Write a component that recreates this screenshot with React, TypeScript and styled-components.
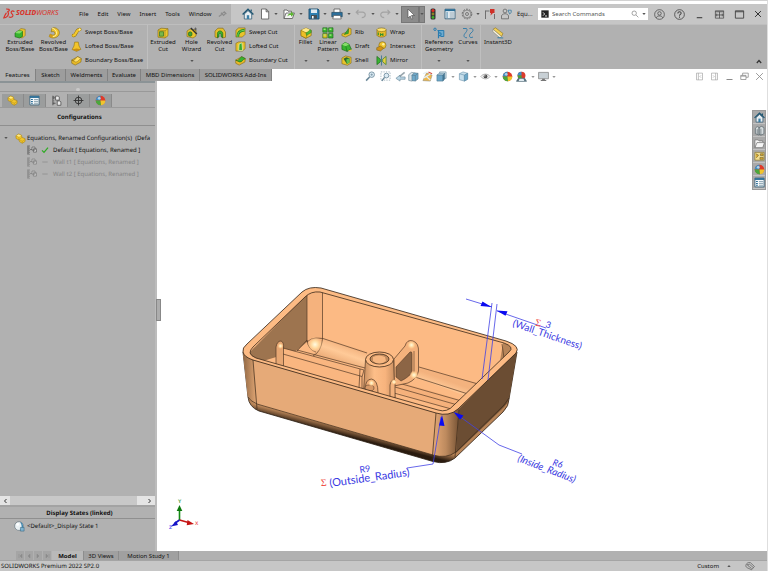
import React from "react";
import styled, { createGlobalStyle, css } from "styled-components";

const GlobalStyle = createGlobalStyle`
  *, *::before, *::after { box-sizing: border-box; }
  html, body, #root { height: 100%; }
  body { margin: 0; background: #fff; overflow: hidden; text-rendering: geometricPrecision; }
  body, button, input { font-family: "Noto Sans", "Open Sans", sans-serif; font-size: 6px; line-height: 8px; color: #111; }
  button { border: 0; padding: 0; background: none; cursor: pointer; white-space: nowrap; }
  svg { display: block; flex: none; }
`;

/* ---------- icons ---------- */

const icons: Record<string, React.ReactNode> = {
  ds: (
    <g fill="none" stroke="#d8342c" strokeWidth="1.200" strokeLinecap="round">
      <path d="M3.500 1 6 1.400C7 2 5.800 3.400 4.600 3.800M4.600 3.800C6 4.600 5.600 7 4.200 8.400 3.200 9.600 1.800 10 .8 10 1.400 8.400 2.400 6.400 3.200 5.200M11 3.400C9.600 2.400 8 3.200 8.200 4.600 8.400 5.800 10.400 6.400 9.800 8 9.200 9.400 7.400 9.600 6.200 9" />
    </g>
  ),
  pinFlat: <path d="M1 9 4.500 6.500M3.500 4.500l3.800 3.800M5 5.500l2.500-2M7 7.500l2-2.400M7 3l3 3" stroke="#8b8b8b" fill="none" strokeWidth="1.400" />,
  home: (
    <g>
      <path d="M2.300 6v5h7.400V6L6 2.600z" fill="#e8eef1" stroke="#355f78" strokeWidth=".8" />
      <path d="M.6 6.400 6 1.300l5.400 5.100" fill="none" stroke="#1f5673" strokeWidth="1.400" />
      <path d="M4.800 11V7.200h2.400V11z" fill="#3c7fa6" />
      <path d="M8.600 1.500h1.200v2H8.600z" fill="#1f5673" />
    </g>
  ),
  page: <path d="M2.500 1h4.800l2.400 2.600V11H2.500zM7.100 1v2.800h2.600" fill="#fff" stroke="#555" strokeWidth=".8" />,
  open: (
    <g>
      <path d="M1 10.500V2h3l1 1.200h3.500V5" fill="#fff" stroke="#555" strokeWidth=".8" />
      <path d="m1 10.500 2-5.500h8.400l-2 5.500z" fill="#f3f3f3" stroke="#555" strokeWidth=".8" />
      <path d="M4.400 8.600C4.600 6.600 6 5.400 8 5.200V3.600l3 2.600-3 2.500V7C6.600 7 5.400 7.400 4.400 8.600z" fill="#5cb531" />
    </g>
  ),
  save: (
    <g>
      <path d="M1 1h9l1 1v9H1z" fill="#2f7fb0" stroke="#1d4c6b" strokeWidth=".9" />
      <path d="M3 1.400h6V5H3z" fill="#dfe9ef" />
      <path d="M3 7h6v3.600H3z" fill="#454f55" />
      <path d="M4 8h1.600v2.400H4z" fill="#fff" />
    </g>
  ),
  print: (
    <g>
      <path d="M3 4.500V1h6v3.500" fill="#fff" stroke="#555" strokeWidth=".8" />
      <path d="M.8 4.400h10.400v4.400H.8z" fill="#2c719e" stroke="#23495f" strokeWidth=".7" />
      <path d="M2.600 7.400h6.800l.8 3.500H1.800z" fill="#fff" stroke="#555" strokeWidth=".7" />
    </g>
  ),
  undo: <path d="M3.500 1.800 1.200 4.200l2.300 2.300M1.400 4.200h6c4.200.2 3.600 5.400-.6 5.400" fill="none" stroke="#a3a3a3" strokeWidth="1.200" />,
  redo: <path d="m8.500 1.800 2.300 2.400-2.300 2.300M10.600 4.200h-6C.4 4.400 1 9.600 5.200 9.600" fill="none" stroke="#a3a3a3" strokeWidth="1.200" />,
  cursor: <path d="M4 1v9l2.200-2 1.400 3.200 1.200-.6L7.500 7.500h2.900z" fill="#fff" stroke="#444" strokeWidth=".6" />,
  traffic: (
    <g>
      <rect x="3.500" y=".5" width="5" height="11" rx="1.600" fill="#333" />
      <circle cx="6" cy="2.500" r="1.500" fill="#e02b20" />
      <circle cx="6" cy="6" r="1.400" fill="#8c8326" />
      <circle cx="6" cy="9.400" r="1.400" fill="#3fae29" />
    </g>
  ),
  list: (
    <g>
      <path d="M1 1.200h10v9.600H1z" fill="#f4f8fa" stroke="#35607a" strokeWidth=".9" />
      <path d="M1 1.200h10v2H1z" fill="#2c6f97" />
      <path d="M2.200 5h2M2.200 7h2M2.200 9h2" stroke="#2c6f97" strokeWidth="1.100" />
      <path d="M5.500 5h4.500M5.500 7h4.500M5.500 9h4.500" stroke="#56798c" strokeWidth=".7" />
    </g>
  ),
  gear: (
    <g fill="none" stroke="#666">
      <circle cx="6" cy="6" r="4.800" strokeDasharray="1.900 1.100" strokeWidth="1" />
      <circle cx="6" cy="6" r="3.900" strokeWidth=".6" />
      <circle cx="6" cy="6" r="1.500" strokeWidth=".8" />
    </g>
  ),
  pinRed: (
    <g>
      <path d="M1.500 2.500v8.500M1.500 3h4M10.500 6v5" fill="none" stroke="#666" strokeWidth=".9" />
      <path d="M6 1h4.500v4H9L6.500 7.500 7 5H6z" fill="#cf3028" />
    </g>
  ),
  people: (
    <g fill="none" stroke="#666" strokeWidth=".8">
      <circle cx="5" cy="3" r="1.900" />
      <path d="M1.500 10.800V8c.4-3 6.600-3 7 0v2.800z" />
      <path d="M8 2.200h3.200v2.400L9.600 6z" stroke="#397ca3" />
    </g>
  ),
  prompt: (
    <g>
      <path d="M.5.500h11v11H.5z" fill="#242424" />
      <path d="M3 3.500 5.500 6 3 8.500M6 9h3" fill="none" stroke="#fff" strokeWidth="1.300" />
    </g>
  ),
  search: <path d="M7.600 7.600 11 11M1.500 4.800a3.300 3.300 0 1 0 6.600 0 3.300 3.300 0 1 0-6.600 0z" fill="none" stroke="#777" strokeWidth="1" />,
  account: (
    <g fill="none" stroke="#444" strokeWidth=".8">
      <circle cx="6" cy="6" r="5.300" />
      <circle cx="6" cy="4.800" r="1.900" />
      <path d="M2.400 9.600C3.200 6.900 8.800 6.900 9.600 9.600" />
    </g>
  ),
  help: (
    <g fill="none" stroke="#444" strokeWidth=".9">
      <circle cx="6" cy="6" r="5.300" />
      <path d="M4.200 4.800C4.200 2.400 7.900 2.500 7.800 4.700 7.700 5.900 6 5.900 6 7.400M6 8.300v1.200" strokeWidth="1.100" />
    </g>
  ),
  minimize: <path d="M3 9.500h6" stroke="#333" strokeWidth="1.100" />,
  panes: <path d="M1.500 2h9v8h-9zM1.500 3h9M6 3v7M1.500 6.500h9M3 5v3M9 5v3" fill="none" stroke="#444" strokeWidth=".8" />,
  maximize: <path d="M1.500 2h9v8h-9zM1.500 3h9" fill="none" stroke="#444" strokeWidth="1" />,
  close: <path d="m2.500 2.500 7 7M9.500 2.500l-7 7" stroke="#333" strokeWidth="1.200" />,
  extrude: (
    <g>
      <path d="m4 4 3-2.500 4.200.8v6L8.500 11l-4.500-.8z" fill="#e9c32e" stroke="#7c6410" strokeWidth=".5" />
      <path d="m1 6 3.500-2.500 4 .7v5.300L5.500 11 1 9.800z" fill="#36b32e" stroke="#176514" strokeWidth=".6" />
      <path d="m1 6 3.500-2.500 4 .7-3 2.300z" fill="#83dd64" />
    </g>
  ),
  revolve: (
    <g>
      <path d="M4 1C8.500-.2 12 3 11.200 6.800 10.400 10.600 5 12.400 1.200 9.600l1-2.500C4.600 8.900 7 8 7 6.300 7 4.600 5 4.300 3.200 4.800z" fill="#f0c42e" stroke="#85690d" strokeWidth=".6" />
      <path d="M4 1C6.500 1.500 8.600 3.600 8.600 6.200 8.500 8.400 6.500 9.700 5 9.500" fill="none" stroke="#fff1a2" strokeWidth="1" />
      <path d="m1.200 9.600 1-2.500 2.600 1.300-.9 2.700z" fill="#d39b19" />
    </g>
  ),
  sweep: (
    <g>
      <path d="M2.600 9.300C6 9.700 4.800 3.200 9.600 2.700" fill="none" stroke="#8a6d0d" strokeWidth="3.600" strokeLinecap="round" />
      <path d="M2.600 9.300C6 9.700 4.800 3.200 9.600 2.700" fill="none" stroke="#f2c830" strokeWidth="2.600" strokeLinecap="round" />
      <circle cx="9.500" cy="2.700" r="1.100" fill="#fff2a7" />
    </g>
  ),
  loft: (
    <g>
      <path d="M4 1.200h4l.8 4.300 2 3.600-4.700 2.200L1.200 9.300l2-3.800z" fill="#f2c42b" stroke="#8a6d0d" strokeWidth=".6" />
      <path d="m1.200 9.300 4.700-1.100 4.900.9-4.700 2.200z" fill="#c88e13" />
    </g>
  ),
  boundary: (
    <g>
      <path d="m.8 5.500 6.500-3.700 4 2.200-.5 3.700L4.600 11 .8 9z" fill="#e8b927" stroke="#80640c" strokeWidth=".6" />
      <path d="M.8 5.500C4 7.500 3.500 4.500 7.300 1.800l4 2.200C7.500 5 8 8.300 4.700 7.500z" fill="#ffe06b" stroke="#80640c" strokeWidth=".5" />
    </g>
  ),
  extrudeCut: (
    <g>
      <path d="m1 3 3-1.800 7 .5v7L8 11l-7-.8z" fill="#eac62f" stroke="#806613" strokeWidth=".6" />
      <path d="m1 3 7 .8V11M8 3.800l3-2.100" fill="none" stroke="#9a7c17" strokeWidth=".6" />
      <path d="M2.500 4.700h4v4.500h-4z" fill="#79b74a" stroke="#307127" strokeWidth=".7" />
    </g>
  ),
  hole: (
    <g>
      <path d="m1 4 3-2 6 1v6L7 11l-6-1.500z" fill="#eac62f" stroke="#806613" strokeWidth=".6" />
      <ellipse cx="4.200" cy="7" rx="1.900" ry="2.200" fill="#42a434" stroke="#1c5b17" strokeWidth=".6" />
      <path d="m4.800 1 6 6" stroke="#333" strokeWidth="1.400" />
      <path d="M9.500.5v3M8 2h3" stroke="#555" strokeWidth=".8" />
    </g>
  ),
  revolveCut: (
    <g>
      <path d="m1 4 3-2.800h5L11.500 5v5.200L8.400 11V8L6 5.200 3.800 8v3L1 10z" fill="#e7c02c" stroke="#7b6210" strokeWidth=".6" />
      <path d="M3.400 10.600V6.200C4 3.100 8.200 3.100 8.800 6.200v4.400L7 9.700V7.500L6 6.300 5 7.500v2.300z" fill="#3bae32" stroke="#176514" strokeWidth=".6" />
    </g>
  ),
  sweepCut: (
    <g>
      <path d="M1 3.500 4 1h7v7l-3 3H1z" fill="#e8c32c" stroke="#7b6210" strokeWidth=".6" />
      <path d="M3 10.500C3 5.500 5.500 4 10.500 3.500" fill="none" stroke="#238d23" strokeWidth="3" />
      <path d="M3 10.500C3 5.500 5.500 4 10.500 3.500" fill="none" stroke="#79d95f" strokeWidth="1" />
    </g>
  ),
  loftCut: (
    <g>
      <path d="M1 2.500 4 1h7v7.500L8 11H1z" fill="#e8c32c" stroke="#7b6210" strokeWidth=".6" />
      <path d="m4.500 3.300 3-1.300.8 8.300H4z" fill="#36aa30" stroke="#ecf3c5" strokeWidth=".7" />
    </g>
  ),
  boundaryCut: (
    <g>
      <path d="m.8 5.500 6.500-3.700 4 2.200-.5 3.700L4.600 11 .8 9z" fill="#e8b927" stroke="#80640c" strokeWidth=".6" />
      <path d="M.8 5.500C4 7.500 3.500 4.500 7.300 1.800l4 2.200C7.500 5 8 8.300 4.700 7.500z" fill="#35b330" stroke="#176514" strokeWidth=".6" />
    </g>
  ),
  fillet: (
    <g>
      <path d="m1 3.300 5-2.300 5.200 2.300v5.300L6 11.300 1 8.700z" fill="#f0c92c" stroke="#7b6210" strokeWidth=".6" />
      <path d="M1 3.300 6 1l5.200 2.300L6 5.800z" fill="#ffe98a" />
      <path d="M1 3.300 6 5.800c1 1.800 1 3.700 0 5.500L1 8.700z" fill="#eebf26" stroke="#7b6210" strokeWidth=".5" />
      <path d="M6 5.800C8 5 9 4.300 9.800 2.700l1.400.6v2.300C9.500 6.600 7.600 7.600 6.600 8.500z" fill="#4cb93a" stroke="#237d1c" strokeWidth=".5" />
    </g>
  ),
  pattern: (
    <g stroke="#176514" strokeWidth=".6">
      {[0.8, 6.6].map((x) =>
        [0.8, 6.6].map((y) => (
          <g key={`${x}-${y}`}>
            <path d={`M${x} ${y}h4.400v4.400h-4.400z`} fill={x < 2 && y > 5 ? "#e6c22c" : "#3bb433"} />
            <path d={`M${x + 0.8} ${y + 0.8}h2v1.400h-2z`} fill="#a4ea7e" stroke="none" />
          </g>
        ))
      )}
    </g>
  ),
  rib: (
    <g>
      <path d="M1 7.500 8 5V1l3 1v6l-6 3-4-1.500z" fill="#e8c32c" stroke="#7b6210" strokeWidth=".6" />
      <path d="M3.500 8.200 8 2.200V7z" fill="#37b030" stroke="#176514" strokeWidth=".5" />
    </g>
  ),
  draft: (
    <g>
      <path d="m1 4 3.500-2.500 4.300 2L11.300 9l-4.800 2.300L1 9.200z" fill="#39b431" stroke="#176514" strokeWidth=".7" />
      <path d="m1 4 3.500-2.500 4.300 2L5.200 5.600z" fill="#87dd6b" />
      <path d="m5.200 5.600 1.300 5.700L11.300 9" fill="none" stroke="#176514" strokeWidth=".6" />
      <path d="m7 11 4.300-2v2.300z" fill="#edc72d" />
    </g>
  ),
  shell: (
    <g>
      <path d="m1 3.300 4-2.300 6 1.500v6.300L7 11.200 1 9.500z" fill="#e8c32c" stroke="#7b6210" strokeWidth=".6" />
      <path d="m2.700 4 3-1.500 3.600 1v4.800L6.500 9.700z" fill="#30642a" />
      <path d="m5.700 5 3.600-1.500v4.800L6.500 9.700z" fill="#63c34a" />
    </g>
  ),
  wrap: (
    <g>
      <path d="M1 3v6c1.500 2.700 8.500 2.700 10 0V3z" fill="#e8b928" stroke="#7b6210" strokeWidth=".6" />
      <ellipse cx="6" cy="3" rx="5" ry="2" fill="#ffe36c" stroke="#7b6210" strokeWidth=".6" />
      <path d="M2.500 6v3M5 6.700v3M5 8.200h2.500M7.500 6.700v3" stroke="#31922c" strokeWidth="1.200" />
    </g>
  ),
  intersect: (
    <g>
      <circle cx="7" cy="4.600" r="3.900" fill="#f0c52d" stroke="#7b6210" strokeWidth=".6" />
      <path d="m.8 7.300 4-1.800 3.500 2.300L5 10.900.8 9.900z" fill="#d0921a" stroke="#7b6210" strokeWidth=".6" />
      <circle cx="8" cy="3.500" r="1.300" fill="#fff0a0" />
    </g>
  ),
  mirror: (
    <g>
      <path d="m1 1.500 3.700 3v3L1 10.500z" fill="#3bb433" stroke="#176514" strokeWidth=".7" />
      <path d="M11 1.500 7.300 4.500v3l3.700 3z" fill="#e9cf43" stroke="#2b7a20" strokeWidth=".7" />
      <path d="M6 .5v11" stroke="#37718f" strokeWidth=".9" />
    </g>
  ),
  refgeo: (
    <g fill="none" stroke="#2b7caf" strokeWidth="1">
      <path d="M4.500 3.500h6.300v6H7.500" fill="#6dabcf" />
      <path d="M5.500 3.500v7.700M5.500 8.500C9 9.500 9 5 5.500 6" strokeWidth="1.200" />
      <circle cx="2" cy="2.300" r="1.200" />
    </g>
  ),
  curves: (
    <g fill="none" stroke="#397faa" strokeWidth="1">
      <path d="M1 1.500h3.500C6.500 4 2 6.500 2 8.500c0 1.500 1 2.300 3 2.300M7.500 1.500c3-.8 4.500 1.500 2.800 3.300C8 6.500 7.300 8 7.500 9.300c.5 1.700 2 1.500 3.500.7" />
    </g>
  ),
  instant: (
    <g>
      <path d="m1 2.300 2.500-1.500L11 6.500l-1.600 3z" fill="#f1cf55" stroke="#8c721c" strokeWidth=".6" />
      <path d="m1 2.300 8.400 7.200L8 10.800.8 4.600z" fill="#faf5dc" stroke="#777" strokeWidth=".5" />
      <path d="m5.500 10.700 5.700.3" stroke="#4384a8" strokeWidth="1.200" />
    </g>
  ),
  part: (
    <g>
      <path d="m1 3 3-2 3.200 1.500.3 2.300 3.500 1.400v3L8 11.200l-3-1.700-.7-2L1.200 6z" fill="#f2c52c" stroke="#a58316" strokeWidth=".6" />
      <path d="m4.300 7.500 3.200-2.700M1 3l3.300 1.500V7.500M5 7.500 8 9v2.200M8 9l3-2" fill="none" stroke="#b08c18" strokeWidth=".5" />
      <path d="m1.500 3 2.600-1.500 2.600 1.200-2.400 1.400z" fill="#ffeb8a" />
    </g>
  ),
  config: (
    <g fill="none" stroke="#444" strokeWidth=".8">
      <path d="M2 .8v10.400M2 3h3M2 9h3" />
      <path d="M5 1.200h3l1 1v3.400H5zM6.800 6.500h3l1 1v3.700h-4z" fill="#ececec" />
      <path d="M3 1.200v9.600" strokeDasharray="1 1" />
    </g>
  ),
  target: (
    <g fill="none" stroke="#333" strokeWidth="1">
      <circle cx="6" cy="6" r="3.600" />
      <path d="M6 .6v10.800M.6 6h10.800" />
    </g>
  ),
  sphere: (
    <g>
      <circle cx="6" cy="6" r="5.200" fill="#e03a29" />
      <path d="M6 6V.8a5.200 5.200 0 0 0-5.200 5.200z" fill="#3c8fc8" />
      <path d="M.8 6a5.200 5.200 0 0 0 5.800 5.200L6 6z" fill="#49a83d" />
      <path d="M6 6l.6 5.200A5.200 5.200 0 0 0 11.200 6z" fill="#f0c52d" />
      <circle cx="4.600" cy="3.600" r="1.500" fill="#fff" opacity=".6" />
    </g>
  ),
  scene: (
    <g>
      <circle cx="6" cy="5" r="4.300" fill="#db3b2d" />
      <path d="M6 5V.7a4.300 4.300 0 0 0-4.300 4.300z" fill="#3c8fc8" />
      <path d="M1.700 5a4.300 4.300 0 0 0 4.700 4.300L6 5z" fill="#45a73a" />
      <path d="M.5 11.300 2.500 8h7l2 3.300z" fill="#5d7480" stroke="#4b6876" strokeWidth=".7" />
      <path d="m3 11 .8-2.500h4.400L9 11z" fill="#dfeaf0" />
    </g>
  ),
  zoomFit: (
    <g fill="none" stroke="#6b8899">
      <circle cx="7.300" cy="4" r="3" fill="#dcebf4" strokeWidth=".9" />
      <path d="M5 6.500 1.200 10.500" strokeWidth="1.700" />
      <path d="M6 4h2.600M7.300 2.700v2.600" strokeWidth=".7" />
    </g>
  ),
  zoomArea: (
    <g fill="none" stroke="#6b8899">
      <path d="M1 1h10v9H1z" strokeDasharray="1.500 1.200" strokeWidth=".6" />
      <circle cx="7" cy="5" r="2.600" fill="#dcebf4" strokeWidth=".9" />
      <path d="M5 7 2 10.800" strokeWidth="1.600" />
    </g>
  ),
  prev: (
    <g fill="none" stroke="#6b8899">
      <path d="m10.500 1.500-6 5" strokeWidth="1.800" stroke="#9aa7ae" />
      <path d="M11 6.500H5.500v-2L1 8l4.500 3V9H11z" fill="#bcd7e6" strokeWidth=".7" />
    </g>
  ),
  section: (
    <g stroke="#557588" strokeWidth=".6">
      <path d="m.8 4 3-2.500 3 .5v7l-2.500 2-3.500-.7z" fill="#d8e2e7" />
      <path d="M4.300 4.500 7 2l4 .5v6.200L8 11l-3.700-.5z" fill="#6fa9ca" />
      <path d="M8 5v6M4.300 4.500 8 5l3-2.500" fill="none" />
    </g>
  ),
  dynamic: (
    <g>
      <path d="M1 10.500 5 2l6 2.500-2 6.500z" fill="#f0b84b" stroke="#8b8b83" strokeWidth=".6" />
      <path d="m1 3 5-2M4 5.300l5 4.500M2 7.500l7-4" stroke="#e4f0f5" strokeWidth="1.300" />
      <path d="M7 1.200 11 3" stroke="#d65040" strokeWidth="1.200" />
    </g>
  ),
  orient: (
    <g stroke="#4c7690" strokeWidth=".6">
      <path d="M4 1h7v7H4z" fill="#e3eef4" />
      <path d="m1 4.500 2.500-2h6L7.500 4.500z" fill="#c5dce9" />
      <path d="M1 4.500h6.500V11H1z" fill="#6ca6c8" />
      <path d="m7.500 4.500 2-2v6.300l-2 2.200z" fill="#3f7796" />
    </g>
  ),
  cube: (
    <g stroke="#5d8aa5" strokeWidth=".6">
      <path d="m1.500 3 4-2 5 1.500v6.500l-3.500 2-5.500-1.500z" fill="#c6deeb" />
      <path d="M1.500 3 7 4.500v6.500M7 4.500l3.500-2" fill="none" />
      <path d="m7 4.500 3.500-2V9L7 11z" fill="#6ba7c9" />
    </g>
  ),
  eye: (
    <g>
      <path d="M.8 6C3.500 2.500 8.500 2.500 11.200 6 8.500 9.500 3.500 9.500.8 6z" fill="#eee" stroke="#999" strokeWidth=".7" />
      <circle cx="6" cy="5.900" r="2.100" fill="#4e4e4e" />
      <circle cx="5.300" cy="5.200" r=".7" fill="#fff" />
    </g>
  ),
  monitor: (
    <g>
      <path d="M.6 1.500h10.800v7H.6z" fill="#c8d0d5" stroke="#818181" strokeWidth=".8" />
      <path d="M4.500 8.500h3v1.300H9v1H3v-1h1.500z" fill="#777" />
    </g>
  ),
  paneLeft: <path d="M2 1.500h8v9H2zM4.500 1.500v9M8 4.500 6.500 6 8 7.500" fill="none" stroke="#999" strokeWidth=".8" />,
  paneRight: <path d="M2 1.500h8v9H2zM7.500 1.500v9M4 4.500 5.500 6 4 7.500" fill="none" stroke="#999" strokeWidth=".8" />,
  minGrey: <path d="M2 10h8" stroke="#888" strokeWidth="1.300" />,
  restore: <path d="M1 4.500h7V10H1zM3.500 4.500V1.500h7.500V7H8M1 5.500h7" fill="none" stroke="#888" strokeWidth="1" />,
  closeGrey: <path d="m1.500 1.500 9 9M10.500 1.500l-9 9" stroke="#888" strokeWidth="1.100" />,
  library: (
    <g stroke="#4e5c62" strokeWidth=".7" fill="#d5dbdd">
      <path d="m1.500 3.500 2-1.800 2 1V11l-4-1.500zM5.500 3 8 1.500l2.800 1.200v7L7.500 11l-2-1z" />
      <path d="M7.500 4v7M3.500 4.500V10" fill="none" />
    </g>
  ),
  folder: <path d="M1 10.500V2h3.500l1 1.200h4V5H11.500l-2 5.500zM1 10.500 3.300 5h6" fill="#f5f5f5" stroke="#727272" strokeWidth=".8" />,
  palette: (
    <g>
      <path d="M1 1.500h10v8.500H1z" fill="#f3df91" stroke="#8d7a37" strokeWidth=".8" />
      <path d="m2 3 3 1.500L2.500 7.500M7 3h3v2H7zM6.500 7H10v2H6.500z" fill="#e2ac26" stroke="#6d6338" strokeWidth=".7" />
    </g>
  ),
  display: (
    <g>
      <circle cx="5.500" cy="5.500" r="4.800" fill="#eaf1f4" stroke="#62717a" strokeWidth=".7" />
      <path d="M6.500 1a4.800 4.800 0 0 1 0 9.200C9 7.500 9 4 6.500 1z" fill="#3f87b0" />
      <path d="M7 7h4v4H7z" fill="#7fb4d2" stroke="#35637d" strokeWidth=".6" />
      <circle cx="4" cy="3.800" r="1.500" fill="#fff" />
    </g>
  ),
  link: (
    <g fill="none" stroke="#555" strokeWidth=".8">
      <path d="M1.200.5v11" strokeWidth="1.200" />
      <path d="M2.800.5v11" strokeDasharray="1.500 1" />
      <path d="M3.500 5.500H6M6 2.500h3.600v3.600H6zM7.700 4.500h3.600v4H7.700z" fill="#d4d4d4" />
    </g>
  ),
  check: <path d="m1.500 6.500 3 3 6-7" fill="none" stroke="#2dab22" strokeWidth="1.900" />,
  dash: <path d="M2 6h8" stroke="#777" strokeWidth="1.200" />,
  tag: (
    <g fill="none" stroke="#555" strokeWidth=".8">
      <path d="M1 5.500C1 3 4 1.200 6.500 2l4.800 4.500L8 10.500 3.500 8.500C2 8 1 7 1 5.500z" />
      <path d="m3.500 5.500 4.500 3.500M5 3.500l4.700 4.200" />
      <circle cx="3.500" cy="4.500" r=".7" />
    </g>
  ),
};

const Icon = ({ name, size = 12 }: { name: string; size?: number }) => (
  <svg width={size} height={size} viewBox="0 0 12 12" aria-hidden="true">
    {icons[name]}
  </svg>
);

const Caret = ({ up = false, tone = "#555" }: { up?: boolean; tone?: string }) => (
  <svg width="4" height="4" viewBox="0 0 4 4" aria-hidden="true">
    <path d={up ? "M.3 3h3.400L2 1z" : "M.3 1h3.400L2 3z"} fill={tone} />
  </svg>
);

/* ---------- frame ---------- */

const Frame = styled.div`
  display: flex;
  flex-direction: column;
  height: 100vh;
  border-top: 1px solid #d2d2d2;
  border-right: 1px solid #dedede;
  padding-top: 3px;
`;

const TitleBar = styled.header`
  display: flex;
  height: 20px;
  flex: none;
  background: #c6c6c6;
`;

const MenuArea = styled.div`
  display: flex;
  align-items: center;
  width: 231px;
  flex: none;
  padding-left: 3px;
  background: #b2b2b2;
`;

const Brand = styled.div`
  display: flex;
  align-items: center;
  gap: 1px;
  width: 76px;
  flex: none;
  font: italic 400 7px/10px "Noto Sans", sans-serif;
  color: #d8342c;
  b { font-weight: 800; }
`;

const Menu = styled.nav`
  display: flex;
  gap: 9px;
  flex: 1;
`;

const QuickBar = styled.div`
  display: flex;
  align-items: center;
  padding-left: 5px;
`;

const Slot = styled.button<{ $w: number; $pressed?: boolean }>`
  display: flex;
  align-items: center;
  justify-content: center;
  flex: none;
  width: ${(p) => p.$w}px;
  height: 17px;
  ${(p) => p.$pressed && css`background: #8b8b8b; outline: 1px solid #777; outline-offset: -1px;`}
`;

const DocName = styled.span`
  width: 24px;
  padding-left: 3px;
`;

const SearchBox = styled.label`
  display: flex;
  align-items: center;
  gap: 3px;
  width: 110px;
  height: 12px;
  padding: 0 2px 0 3px;
  background: #fff;
  input {
    flex: 1;
    min-width: 0;
    border: 0;
    padding: 0;
    outline: 0;
    background: none;
    &::placeholder { color: #555; opacity: 1; }
  }
`;

const WindowButtons = styled.div`
  display: flex;
  align-items: center;
  margin-left: auto;
`;

/* ---------- ribbon ---------- */

const Ribbon = styled.div`
  display: flex;
  flex: none;
  height: 45px;
  padding: 0 5px 0 3px;
  border-top: 1px solid #bebebe;
  background: #b1b1b1;
`;

const Group = styled.div`
  display: flex;
  border-right: 1px solid #bfbfbf;
`;

const BigButton = styled.button<{ $w: number }>`
  display: grid;
  grid-template-rows: 13px 7px 7px 10px;
  justify-items: center;
  align-items: center;
  align-content: start;
  width: ${(p) => p.$w}px;
  padding-top: 1px;
  line-height: 7px;
  svg:last-child { align-self: end; }
`;

const SmallColumn = styled.div<{ $w: number }>`
  display: flex;
  flex-direction: column;
  width: ${(p) => p.$w}px;
  padding-left: 1px;
`;

const SmallButton = styled.button`
  display: flex;
  align-items: center;
  gap: 3px;
  height: 14px;
`;

const Collapse = styled.button`
  align-self: flex-end;
  margin-left: auto;
  padding-bottom: 5px;
`;

/* ---------- command tabs and view bar ---------- */

const TabRow = styled.div`
  display: flex;
  align-items: flex-start;
  flex: none;
  height: 12px;
`;

const CommandTabs = styled.div`
  display: flex;
  width: 272px;
  height: 12px;
  margin-right: 91px;
  background: #9d9d9d;
`;

const CommandTab = styled.button<{ $w: number; $on?: boolean }>`
  width: ${(p) => p.$w}px;
  flex: none;
  border-right: 1px solid #828282;
  background: ${(p) => (p.$on ? "#b1b1b1" : "#9d9d9d")};
`;

const ViewBar = styled.div`
  display: flex;
  flex: 1;
  height: 15px;
  align-items: center;
  position: relative;
  z-index: 1;
`;

/* ---------- workspace ---------- */

const Workspace = styled.div`
  display: flex;
  flex: 1;
  min-height: 0;
`;

const SidePanel = styled.aside`
  display: flex;
  flex-direction: column;
  width: 157px;
  flex: none;
  overflow: hidden;
  border-right: 2px solid #bcbcbc;
  background: #b1b1b1;
`;

const Grip = styled.div`
  display: flex;
  justify-content: center;
  height: 11px;
  padding-top: 5px;
  border-top: 2px solid #8b9396;
  border-bottom: 1px solid #999;
  &::after { content: ""; width: 4px; height: 3px; border-radius: 2px; background: #c9c9c9; }
`;

const PanelTabs = styled.div`
  display: flex;
  height: 16px;
  padding: 2px 0 0 2px;
  border-bottom: 1px solid #9a9a9a;
`;

const PanelTab = styled.button<{ $on?: boolean }>`
  display: flex;
  align-items: center;
  justify-content: center;
  width: 22px;
  border-right: 1px solid #8a8a8a;
  background: ${(p) => (p.$on ? "#b1b1b1" : "#9b9d9d")};
`;

const PanelTitle = styled.h2<{ $h: number }>`
  display: grid;
  place-items: center;
  flex: none;
  height: ${(p) => p.$h}px;
  margin: 0;
  padding-left: 4px;
  border-bottom: 1px solid #8f8f8f;
  font-size: 6px;
  font-weight: 700;
`;

const Tree = styled.ul`
  flex: 1;
  margin: 0;
  padding: 6px 0 0;
  list-style: none;
`;

const TreeRow = styled.li<{ $level?: number; $muted?: boolean }>`
  display: flex;
  align-items: center;
  height: 12px;
  padding-left: ${(p) => (p.$level ? 27 : 4)}px;
  white-space: nowrap;
  ${(p) => p.$muted && css`color: #858585; svg { opacity: .6; }`}
  > svg { margin-right: ${(p) => (p.$level ? 4 : 1)}px; }
`;

const Twisty = styled.button`
  width: 11px;
`;

const ScrollBar = styled.div`
  display: flex;
  height: 9px;
  flex: none;
  background: #c8c8c8;
`;

const ScrollButton = styled.button<{ $w: number }>`
  width: ${(p) => p.$w}px;
  margin-left: ${(p) => (p.$w > 12 ? "auto" : 0)};
  padding-left: ${(p) => (p.$w > 12 ? 7 : 0)}px;
  background: #e4e4e4;
  display: grid;
  place-items: center;
`;

const StatePane = styled.div`
  height: 46px;
  flex: none;
  border-top: 2px solid #a3a3a3;
`;

const StateRow = styled.div`
  display: flex;
  align-items: center;
  gap: 2px;
  height: 14px;
  padding-left: 14px;
`;

const Graphics = styled.main`
  position: relative;
  flex: 1;
  min-width: 0;
  background: #fff;
`;

const Drawing = styled.svg`
  width: 100%;
  height: 100%;
`;

const Splitter = styled.button`
  position: absolute;
  left: -1px;
  top: 218px;
  width: 5px;
  height: 22px;
  border: 1px solid #888;
  background: #adadad;
`;

const TaskPane = styled.div`
  position: absolute;
  right: 1px;
  top: 29px;
  width: 14px;
  border: 1px solid #999;
  background: #a9a9a9;
`;

const TaskButton = styled.button`
  display: grid;
  place-items: center;
  width: 12px;
  height: 13px;
  border-bottom: 1px solid #c2c2c2;
`;

/* ---------- footer ---------- */

const SheetBar = styled.div`
  display: flex;
  flex: none;
  height: 9px;
  padding-left: 16px;
  background: #b1b1b1;
`;

const SheetNav = styled.button`
  width: 8px;
  margin-right: 1px;
  background: #a5a5a5;
  display: grid;
  place-items: center;
`;

const SheetTab = styled.button<{ $w: number; $on?: boolean }>`
  width: ${(p) => p.$w}px;
  background: ${(p) => (p.$on ? "#b9b9b9" : "#a0a0a0")};
  border-right: 1px solid #8d8d8d;
  font-weight: ${(p) => (p.$on ? 700 : 400)};
`;

const StatusBar = styled.footer`
  display: flex;
  align-items: center;
  flex: none;
  height: 11px;
  padding: 0 12px 0 1px;
  border-top: 1px solid #a4a4a4;
  background: #c6c6c6;
`;

const UnitMenu = styled.button`
  display: flex;
  align-items: center;
  gap: 8px;
  margin: 0 14px 0 auto;
`;

/* ---------- data ---------- */

type SlotSpec = [icon: string, width: number, label: string];

const quickTools: SlotSpec[] = [
  ["home", 23, "Home"], ["page", 11, "New"], ["", 12, "New options"], ["open", 13, "Open"], ["", 11, "Open options"],
  ["save", 15, "Save"], ["", 8, "Save options"], ["print", 16, "Print"], ["", 8, "Print options"],
  ["undo", 16, "Undo"], ["", 8, "Undo list"], ["redo", 16, "Redo"], ["", 8, "Redo list"],
  ["cursor", 18, "Select"], ["", 6, "Select options"], ["traffic", 16, "Rebuild"], ["list", 18, "File properties"],
  ["gear", 15, "Options"], ["", 8, "Options list"], ["pinRed", 16, "Touch"], ["people", 16, "Share"],
];

const viewTools: SlotSpec[] = [
  ["zoomFit", 15, "Zoom to fit"], ["zoomArea", 15, "Zoom to area"], ["prev", 14, "Previous view"], ["section", 13, "Section view"],
  ["dynamic", 14, "Dynamic views"], ["orient", 15, "View orientation"], ["", 7, "Orientation options"], ["cube", 15, "Display style"],
  ["", 7, "Display options"], ["eye", 14, "Hide items"], ["", 8, "Hide options"], ["sphere", 14, "Edit appearance"],
  ["scene", 15, "Apply scene"], ["", 7, "Scene options"], ["monitor", 14, "View settings"], ["", 8, "View options"],
];

const Slots = ({ items, size, tone }: { items: SlotSpec[]; size: number; tone?: string }) => (
  <>
    {items.map(([icon, w, label]) => (
      <Slot key={label} $w={w} $pressed={label.startsWith("Select")} aria-label={label}>
        {icon ? <Icon name={icon} size={size} /> : <Caret tone={tone} />}
      </Slot>
    ))}
  </>
);

const Big = ({ icon, w, lines, menu }: { icon: string; w: number; lines: [string, string?]; menu?: boolean }) => (
  <BigButton $w={w}>
    <Icon name={icon} size={12} />
    <span>{lines[0]}</span>
    <span>{lines[1]}</span>
    {menu && <Caret />}
  </BigButton>
);

const Small = ({ w, items }: { w: number; items: [string, string][] }) => (
  <SmallColumn $w={w}>
    {items.map(([icon, text]) => (
      <SmallButton key={text}>
        <Icon name={icon} size={11} />
        {text}
      </SmallButton>
    ))}
  </SmallColumn>
);

/* ---------- model ---------- */

const Model = () => (
  <Drawing viewBox="157 81 610 470" role="img" aria-label="Rectangular tray with dimensions">
    <defs>
      <linearGradient id="leftCorner" x1="0" x2="1">
        <stop offset="0" stopColor="#8f6744" />
        <stop offset="1" stopColor="#e5a976" />
      </linearGradient>
      <linearGradient id="frontCorner" x1="0" x2="1">
        <stop offset="0" stopColor="#e5a976" />
        <stop offset=".5" stopColor="#bd8a5e" />
        <stop offset="1" stopColor="#755234" />
      </linearGradient>
      <linearGradient id="base" gradientUnits="userSpaceOnUse" x1="352" y1="429" x2="350" y2="437">
        <stop offset="0" stopColor="#b98558" />
        <stop offset="1" stopColor="#2a1b0f" />
      </linearGradient>
      <linearGradient id="floor" gradientUnits="userSpaceOnUse" x1="347" y1="345" x2="341" y2="362">
        <stop offset="0" stopColor="#f3b27e" />
        <stop offset=".5" stopColor="#ffca98" />
        <stop offset="1" stopColor="#efb07c" />
      </linearGradient>
      <linearGradient id="boss" x1="0" x2="1">
        <stop offset="0" stopColor="#c48b5d" />
        <stop offset=".35" stopColor="#fdbe88" />
        <stop offset=".7" stopColor="#f7b37d" />
        <stop offset="1" stopColor="#c98f60" />
      </linearGradient>
      <radialGradient id="shine">
        <stop offset="0" stopColor="#fffbe0" />
        <stop offset=".5" stopColor="#ffd79b" />
        <stop offset="1" stopColor="#fdbb84" stopOpacity="0" />
      </radialGradient>
      <clipPath id="cavity">
        <path d="M250 353Q250 350 253 347L305 297Q311 291 320 292L504 343Q515 347 509 352L454 405Q447 413 438 410L256 358Q251 356 250 353Z" />
      </clipPath>
    </defs>

    <g strokeLinejoin="round">
      {/* outer body */}
      <path d="M243 352 248 397Q249 407 259 411L433 461.500Q446 465 455 458L503 412Q509 406 509 399L517 352 442 400Z" fill="url(#base)" stroke="#2a1d12" strokeWidth=".8" />
      <path d="M243 352 248 397Q250 401 256 404L433 455 436 413 253 360Z" fill="#e6aa78" />
      <path d="M243 352 248 397Q250 401 257 405L253 360Z" fill="url(#leftCorner)" />
      <path d="M436 413 433 455Q446 459 456 452L459 409Z" fill="url(#frontCorner)" />
      <path d="M459 409 517 351 509 399Q508 403 504 407L456 453Z" fill="#6b4d33" />
      <g fill="none" stroke="#3b291a" strokeWidth=".7">
        <path d="M253 360 257 409M436 413 432 461M459 410 455 457M248 397Q250 401 257 404L433 455Q446 459 456 452L504 405 509 398" />
      </g>

      {/* rim */}
      <path d="M243 352Q242 348 247 344L302 292Q309 286 321 288L506 341Q521 346 516 353L458 409Q449 417 436 413L253 360Q244 357 243 352Z" fill="#fdbb84" stroke="#2f2115" strokeWidth=".8" />

      {/* cavity */}
      <g clipPath="url(#cavity)">
        <path d="M243 285H520V415H243Z" fill="#fcba84" />
        <path d="M248 354 307 294V342L296 351 250 365Z" fill="#9d744f" />
        <path d="M323 338 368 352 366 368 313 355Z" fill="url(#floor)" />
        <path d="M419 367 480 384 469 397 415 377Z" fill="url(#floor)" />
        <path d="M396 381 465 401 455 411 396 392Z" fill="#f5b17b" />
        <path d="M503 343 515 345 513 355 500 361Z" fill="#b78458" />
        <path d="M307 294Q314 289 323 292V341H307Z" fill="#f5b27d" />
        <g fill="none" stroke="#553b26" strokeWidth=".7">
          <path d="M307 294V342M322.500 292V339Q321 352 313 356M307 342Q311 338 316 338L323 338.500 367 353M297 351 307 340Q308 350 316 352M297 350 365 368M502 344 504 358M419 367 478 384M415 377 468 394M395 382 465 402M395 387 461 406M394 393 455 410" />
        </g>
        <circle cx="315" cy="344.500" r="8" fill="url(#shine)" />

        {/* left rib */}
        <path d="M283 348 364 371V393L283 370Z" fill="#f9b680" />
        <path d="M276 366V347Q277 341 281 341 284 342 283.500 348V368Z" fill="#e7a773" stroke="#553b26" strokeWidth=".7" />
        <circle cx="280.500" cy="346" r="3" fill="url(#shine)" />
        <path d="M283 348 364 370M283 354 362 376.500M364 370 362 377V389M360 369 359 388" fill="none" stroke="#553b26" strokeWidth=".7" />

        {/* right rib */}
        <path d="M394 359 405 346Q407 339 413 341 419 343 418.500 352V371Q417 379 408 383L394 386Z" fill="#f4b27c" stroke="#553b26" strokeWidth=".7" />
        <path d="M396 367 410 352Q412 351 412 354V371Q411 376 401 381L396 377Z" fill="#8c6545" stroke="#553b26" strokeWidth=".6" />
        <path d="M414 351V373" fill="none" stroke="#553b26" strokeWidth=".6" />
        <circle cx="411.500" cy="345" r="4.500" fill="url(#shine)" />
        <circle cx="414" cy="375" r="4.500" fill="url(#shine)" />

        {/* boss */}
        <path d="M365.500 360 363 400H395L393.500 360Z" fill="url(#boss)" stroke="#553b26" strokeWidth=".7" />
        <ellipse cx="379.500" cy="359.500" rx="14" ry="7.500" fill="#fdbb84" stroke="#3f2c1c" strokeWidth=".8" />
        <ellipse cx="379.500" cy="359" rx="9.500" ry="5" fill="#c08a5d" stroke="#3f2c1c" strokeWidth=".8" />
        <path d="M373 361Q379 366 386 361L385 357Q379 354 373 357Z" fill="#f6b680" />
        <path d="M365 391Q365 379 371.500 379 378 380 378 393V398H365Z" fill="#efad78" stroke="#553b26" strokeWidth=".7" />
        <ellipse cx="369.500" cy="388" rx="4.500" ry="3" fill="#d99a68" stroke="#553b26" strokeWidth=".6" />
        <circle cx="371.500" cy="383" r="3.500" fill="url(#shine)" />
        <path d="M390 400V385Q391 379 395 380V400Z" fill="#f3b27d" stroke="#553b26" strokeWidth=".7" />
        <circle cx="394" cy="382" r="3" fill="url(#shine)" />
      </g>
      <path d="M250 353Q250 350 253 347L305 297Q311 291 320 292L504 343Q515 347 509 352L454 405Q447 413 438 410L256 358Q251 356 250 353Z" fill="none" stroke="#3b291a" strokeWidth=".8" />
    </g>

    {/* dimensions */}
    <g fill="none" stroke="#4141e4" strokeWidth=".8">
      <path d="M466 299 492 307M497 311 546 328M492 303 482 379M497 304 488 380M441 417 433 464 407 468M455 413 499 445 522 454" />
    </g>
    <g fill="#0b0bf0">
      <path d="m491.500 307-11-1 2-4.500zM496.500 310.500l11 .8-2 4.500zM442 415l2.500 11-5.500-.6zM453.500 412l10 3.500-3.500 4.200z" />
    </g>
    <g fill="#3838e2" fontFamily="Lato, sans-serif" fontSize="10">
      <text transform="rotate(17 545 327)" x="545" y="327" fontSize="9">3</text>
      <text transform="rotate(19 512 326)" x="512" y="326">(Wall_Thickness)</text>
      <text transform="rotate(-8 360 473)" x="360" y="473" fontSize="9">R9</text>
      <text transform="rotate(-8 330 487)" x="330" y="487" fontSize="11">(Outside_Radius)</text>
      <text transform="rotate(18 552 465)" x="552" y="465" fontSize="9" fontStyle="italic">R6</text>
      <text transform="rotate(21 517 461)" x="517" y="461" fontStyle="italic">(Inside_Radius)</text>
    </g>
    <g fill="#f04a42" fontFamily="Liberation Serif, serif" fontSize="10">
      <text x="535" y="326" transform="rotate(8 536 326)">Σ</text>
      <text x="321" y="486" transform="rotate(-4 322 486)">Σ</text>
    </g>

    {/* axis triad */}
    <g strokeWidth="1.600">
      <path d="M179.500 520V510" stroke="#128a12" />
      <path d="m176.700 511 2.800-6 2.800 6z" fill="#0d780d" />
      <path d="m179.500 520 9 2.500" stroke="#c51414" />
      <path d="m187.500 520 6.500 4-7.300 1.200z" fill="#c51414" />
      <path d="m179.500 520-5 3.500" stroke="#1414c8" />
      <path d="m176 521-5 5.500 7-1.500z" fill="#1414c8" />
    </g>
    <g fontFamily="Liberation Sans, sans-serif" fontSize="5" fontWeight="700">
      <text x="178" y="503" fill="#3f9a3f">Y</text>
      <text x="195" y="525" fill="#ef6868">X</text>
      <text x="169" y="529" fill="#4d4df0">Z</text>
    </g>
  </Drawing>
);

/* ---------- page ---------- */

export default function App() {
  return (
    <>
      <GlobalStyle />
      <Frame>
        <TitleBar>
          <MenuArea>
            <Brand>
              <Icon name="ds" size={12} />
              <span><b>SOLID</b>WORKS</span>
            </Brand>
            <Menu>
              {["File", "Edit", "View", "Insert", "Tools", "Window"].map((m) => (
                <button key={m}>{m}</button>
              ))}
            </Menu>
            <Slot $w={16} aria-label="Pin menu"><Icon name="pinFlat" size={10} /></Slot>
          </MenuArea>
          <QuickBar>
            <Slots items={quickTools} size={12} />
            <DocName>Equ...</DocName>
            <SearchBox>
              <Icon name="prompt" size={8} />
              <input placeholder="Search Commands" aria-label="Search Commands" />
              <Icon name="search" size={8} />
              <Caret />
            </SearchBox>
          </QuickBar>
          <WindowButtons>
            {["account", "help", "minimize", "panes", "maximize", "close"].map((n) => (
              <Slot key={n} $w={n === "close" ? 18 : 20} aria-label={n}><Icon name={n} size={n === "close" ? 10 : 11} /></Slot>
            ))}
          </WindowButtons>
        </TitleBar>

        <Ribbon>
          <Group>
            <Big icon="extrude" w={34} lines={["Extruded", "Boss/Base"]} />
            <Big icon="revolve" w={33} lines={["Revolved", "Boss/Base"]} />
            <Small w={77} items={[["sweep", "Swept Boss/Base"], ["loft", "Lofted Boss/Base"], ["boundary", "Boundary Boss/Base"]]} />
          </Group>
          <Group>
            <Big icon="extrudeCut" w={30} lines={["Extruded", "Cut"]} />
            <Big icon="hole" w={27} lines={["Hole", "Wizard"]} menu />
            <Big icon="revolveCut" w={29} lines={["Revolved", "Cut"]} />
            <Small w={60} items={[["sweepCut", "Swept Cut"], ["loftCut", "Lofted Cut"], ["boundaryCut", "Boundary Cut"]]} />
          </Group>
          <Group>
            <Big icon="fillet" w={21} lines={["Fillet"]} menu />
            <Big icon="pattern" w={24} lines={["Linear", "Pattern"]} menu />
            <Small w={35} items={[["rib", "Rib"], ["draft", "Draft"], ["shell", "Shell"]]} />
            <Small w={46} items={[["wrap", "Wrap"], ["intersect", "Intersect"], ["mirror", "Mirror"]]} />
          </Group>
          <Group>
            <Big icon="refgeo" w={34} lines={["Reference", "Geometry"]} menu />
            <Big icon="curves" w={24} lines={["Curves"]} menu />
          </Group>
          <Big icon="instant" w={34} lines={["Instant3D"]} />
          <Collapse aria-label="Collapse ribbon">
            <svg width="6" height="5" viewBox="0 0 6 5"><path d="m.8 4 2.200-2.500L5.200 4" fill="none" stroke="#333" strokeWidth="1.200" /></svg>
          </Collapse>
        </Ribbon>

        <TabRow>
          <CommandTabs role="tablist">
            {([["Features", 36], ["Sketch", 30], ["Weldments", 42], ["Evaluate", 33], ["MBD Dimensions", 59], ["SOLIDWORKS Add-Ins", 72]] as [string, number][]).map(([t, w], i) => (
              <CommandTab key={t} role="tab" aria-selected={i === 0} $w={w} $on={i === 0}>{t}</CommandTab>
            ))}
          </CommandTabs>
          <ViewBar>
            <Slots items={viewTools} size={11} tone="#999" />
            <WindowButtons>
              {["paneLeft", "paneRight", "minGrey", "restore", "closeGrey"].map((n) => (
                <Slot key={n} $w={15} aria-label={n}><Icon name={n} size={9} /></Slot>
              ))}
            </WindowButtons>
          </ViewBar>
        </TabRow>

        <Workspace>
          <SidePanel>
            <Grip />
            <PanelTabs role="tablist">
              {["part", "list", "config", "target", "sphere"].map((n) => (
                <PanelTab key={n} role="tab" aria-label={n} aria-selected={n === "config"} $on={n === "config"}>
                  <Icon name={n} size={11} />
                </PanelTab>
              ))}
            </PanelTabs>
            <PanelTitle $h={18}>Configurations</PanelTitle>
            <Tree>
              <TreeRow>
                <Twisty aria-label="Collapse"><Caret /></Twisty>
                <Icon name="part" size={11} />
                Equations, Renamed Configuration(s)&nbsp; (Defa
              </TreeRow>
              <TreeRow $level={1}><Icon name="link" size={10} /><Icon name="check" size={8} />Default [ Equations, Renamed ]</TreeRow>
              <TreeRow $level={1} $muted><Icon name="link" size={10} /><Icon name="dash" size={8} />Wall t1 [ Equations, Renamed ]</TreeRow>
              <TreeRow $level={1} $muted><Icon name="link" size={10} /><Icon name="dash" size={8} />Wall t2 [ Equations, Renamed ]</TreeRow>
            </Tree>
            <ScrollBar>
              <ScrollButton $w={10} aria-label="Scroll left">
                <svg width="5" height="6" viewBox="0 0 5 6"><path d="M3.500 1 1.500 3l2 2" fill="none" stroke="#333" /></svg>
              </ScrollButton>
              <ScrollButton $w={18} aria-label="Scroll right">
                <svg width="5" height="6" viewBox="0 0 5 6"><path d="m1.500 1 2 2-2 2" fill="none" stroke="#333" /></svg>
              </ScrollButton>
            </ScrollBar>
            <StatePane>
              <PanelTitle $h={12}>Display States (linked)</PanelTitle>
              <StateRow><Icon name="display" size={11} />&lt;Default&gt;_Display State 1</StateRow>
            </StatePane>
          </SidePanel>
          <Graphics>
            <Model />
            <Splitter aria-label="Collapse panel" />
            <TaskPane>
              {["home", "library", "folder", "palette", "sphere", "list"].map((n) => (
                <TaskButton key={n} aria-label={n}><Icon name={n} size={11} /></TaskButton>
              ))}
            </TaskPane>
          </Graphics>
        </Workspace>

        <SheetBar>
          {["M2 1v4M5 1 3 3l2 2z", "M4 1 2 3l2 2z", "m2 1 2 2-2 2z", "M5 1v4M2 1l2 2-2 2z"].map((d) => (
            <SheetNav key={d} aria-label="Scroll tabs">
              <svg width="6" height="6" viewBox="0 0 6 6"><path d={d} fill="#8b8b8b" stroke="#8b8b8b" strokeWidth=".5" /></svg>
            </SheetNav>
          ))}
          <SheetTab $w={32} $on>Model</SheetTab>
          <SheetTab $w={35}>3D Views</SheetTab>
          <SheetTab $w={60}>Motion Study 1</SheetTab>
        </SheetBar>
        <StatusBar>
          <span>SOLIDWORKS Premium 2022 SP2.0</span>
          <UnitMenu>Custom <Caret up /></UnitMenu>
          <Icon name="tag" size={10} />
        </StatusBar>
      </Frame>
    </>
  );
}
